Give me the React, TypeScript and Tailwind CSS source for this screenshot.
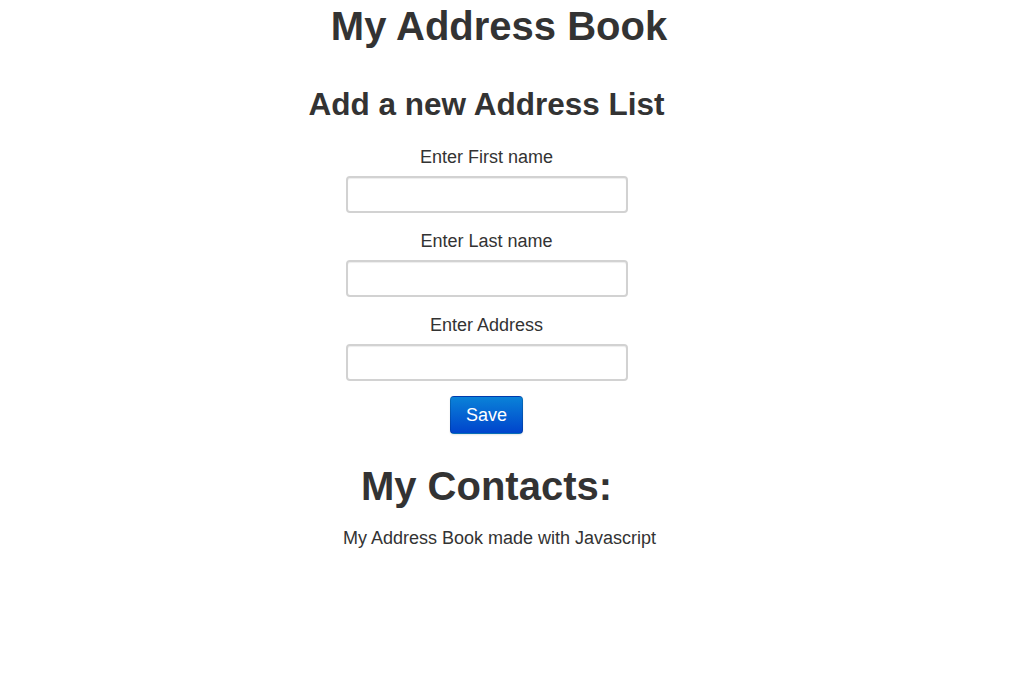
import React from "react";

const Field = ({ label, first }: { label: string; first?: boolean }) => (
  <>
    <label
      className={`block text-[18px] leading-[20px] text-[#333] ${first ? "mt-[26px]" : "mt-[18px]"} mb-[9px]`}
    >
      {label}
    </label>
    <input
      type="text"
      className="block w-[282px] h-[37px] rounded-[4px] border-2 border-[#d2d2d2] bg-white shadow-[inset_0_1px_1px_rgba(0,0,0,0.075)] outline-none"
    />
  </>
);

export default function App() {
  return (
    <div
      className="w-full min-h-[683px] bg-white text-[#333]"
      style={{ fontFamily: '"Liberation Sans", Arial, sans-serif' }}
    >
      <div className="w-[973px] flex flex-col items-center">
        <h1 className="mt-[4px] pl-[25px] text-[40px] leading-[44px] font-bold">My Address Book</h1>
        <h2 className="mt-[39px] text-[31.5px] leading-[34px] font-bold">Add a new Address List</h2>
        <Field label="Enter First name" first />
        <Field label="Enter Last name" />
        <Field label="Enter Address" />
        <button
          type="button"
          className="mt-[15px] w-[73px] h-[38px] rounded-[4px] border border-[rgba(0,0,0,0.15)] bg-[linear-gradient(to_bottom,#0a82d8,#0044cc)] text-white text-[18px] leading-[20px] shadow-[0_1px_2px_rgba(0,0,0,0.1)]"
        >
          Save
        </button>
        <h1 className="mt-[30px] text-[40px] leading-[44px] font-bold">My Contacts:</h1>
        <p className="mt-[20px] pl-[26px] text-[18px] leading-[20px]">My Address Book made with Javascript</p>
      </div>
    </div>
  );
}
